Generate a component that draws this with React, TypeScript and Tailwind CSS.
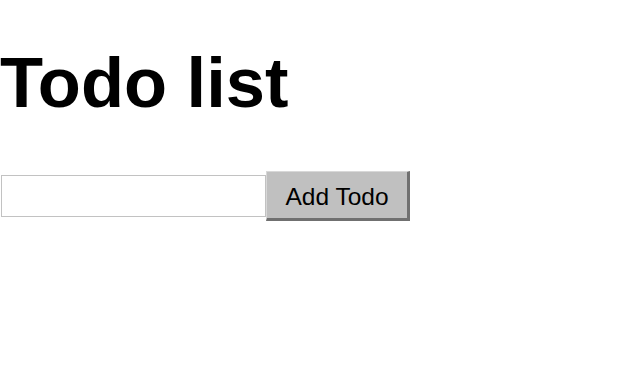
import React from "react";

export default function App() {
  return (
    <div className="w-[630px] h-[370px] bg-white text-black font-['Liberation_Sans',Arial,sans-serif]">
      <h1 className="pt-[43px] text-[70.5px] leading-[80px] font-bold">Todo list</h1>
      <div className="mt-[48px] flex items-center">
        <input
          type="text"
          className="ml-[1px] w-[265px] h-[42px] border border-[#c2c2c2] bg-white outline-none"
        />
        <button className="w-[144px] h-[50px] bg-[#c0c0c0] border-t border-l border-t-[#d8d8d8] border-l-[#d8d8d8] border-r-[3px] border-b-[3px] border-r-[#707070] border-b-[#707070] text-[24.5px] leading-none text-black pt-[4px]">
          Add Todo
        </button>
      </div>
    </div>
  );
}
